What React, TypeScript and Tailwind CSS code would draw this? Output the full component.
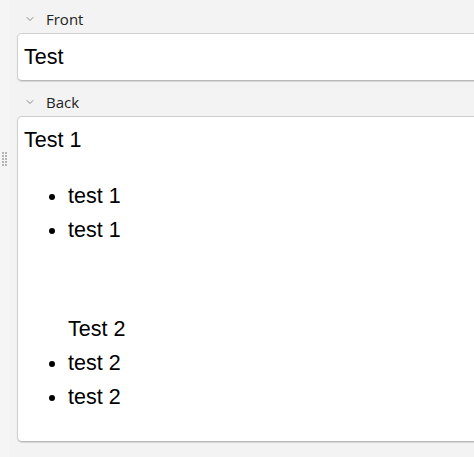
import { ChevronDown } from "lucide-react";

function FieldLabel({ name }: { name: string }) {
    return (
        <div className="flex h-[28px] items-center pl-[7px] text-[15px] text-[#222]" style={{ fontFamily: '"Open Sans", "Noto Sans", sans-serif' }}>
            <ChevronDown className="mr-[10px] h-[12px] w-[12px] text-[#8a8a8a]" strokeWidth={2} />
            <span>{name}</span>
        </div>
    );
}

export default function App() {
    const body = { fontFamily: '"Liberation Sans", Arial, sans-serif' };

    return (
        <div className="relative flex h-[457px] w-[474px] overflow-hidden bg-[#f3f3f3]">
            <div className="flex w-[9px] shrink-0 flex-col items-center justify-center bg-[#f5f5f5] pb-[140px]">
                <div className="grid grid-cols-2 gap-x-[1px] gap-y-[1px]">
                    {Array.from({ length: 10 }).map((_, i) => (
                        <span key={i} className="h-[2px] w-[2px] bg-[#b5b5b5]" />
                    ))}
                </div>
            </div>
            <div className="flex flex-1 flex-col pl-[8px] pt-[5px]">
                <FieldLabel name="Front" />
                <div
                    className="-mr-[10px] h-[48px] rounded-[5px] border border-[#cfcfcf] border-b-[#b8b8b8] bg-white px-[6px] pt-[9px] text-[21.5px] leading-[28px] text-black shadow-[0_1px_1px_rgba(0,0,0,0.12)]"
                    style={body}
                >
                    Test
                </div>
                <div className="h-[7px]" />
                <FieldLabel name="Back" />
                <div
                    className="-mr-[10px] h-[326px] rounded-[5px] border border-[#cfcfcf] border-b-[#b8b8b8] bg-white px-[6px] pt-[6px] text-[21.5px] leading-[34px] text-black shadow-[0_1px_1px_rgba(0,0,0,0.12)]"
                    style={body}
                >
                    <div>Test 1</div>
                    <ul className="my-[22px] list-disc pl-[44px]">
                        <li>test 1</li>
                        <li>test 1</li>
                    </ul>
                    <div className="h-[43px]" />
                    <ul className="list-disc pl-[44px]">
                        <div>Test 2</div>
                        <li>test 2</li>
                        <li>test 2</li>
                    </ul>
                </div>
            </div>
        </div>
    );
}
